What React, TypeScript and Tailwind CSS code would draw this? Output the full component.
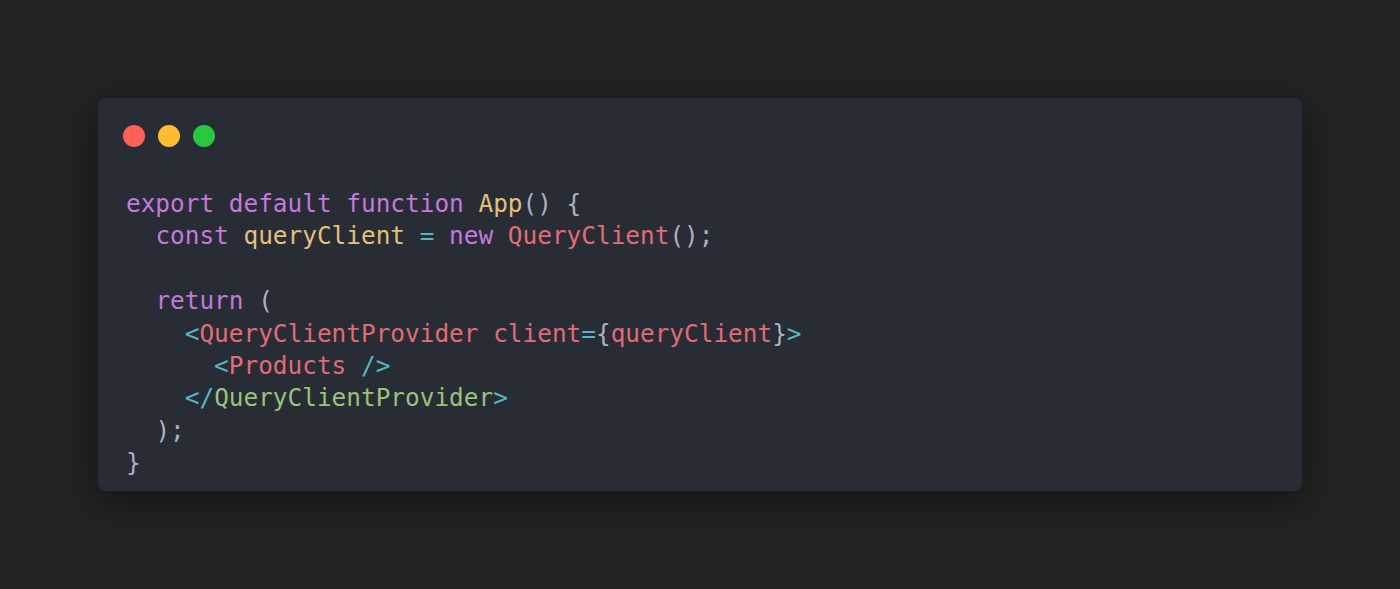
import React from "react";

const P = "text-[#c678dd]";
const Y = "text-[#e5c07b]";
const R = "text-[#e06c75]";
const C = "text-[#56b6c2]";
const G = "text-[#98c379]";
const D = "text-[#abb2bf]";

export default function App() {
  return (
    <div className="w-[1400px] h-[589px] bg-[#222424] p-[98px] box-border">
      <div className="w-full h-full rounded-[8px] bg-[#282c35] shadow-[0_10px_40px_rgba(0,0,0,0.45)] box-border">
        <div className="flex gap-[13px] pl-[25px] pt-[27px]">
          <div className="w-[22px] h-[22px] rounded-full bg-[#ff5f57]" />
          <div className="w-[22px] h-[22px] rounded-full bg-[#febc2e]" />
          <div className="w-[22px] h-[22px] rounded-full bg-[#28c840]" />
        </div>
        <pre
          className="mt-[41px] pl-[28px] text-[24.4px] leading-[32.4px] text-[#abb2bf]"
          style={{ fontFamily: '"DejaVu Sans Mono", monospace' }}
        >
          <span className={P}>export</span> <span className={P}>default</span>{" "}
          <span className={P}>function</span> <span className={Y}>App</span>
          <span className={D}>() {"{"}</span>
          {"\n"}
          {"  "}
          <span className={P}>const</span> <span className={Y}>queryClient</span>{" "}
          <span className={C}>=</span> <span className={P}>new</span>{" "}
          <span className={R}>QueryClient</span>
          <span className={D}>();</span>
          {"\n\n"}
          {"  "}
          <span className={P}>return</span> <span className={D}>(</span>
          {"\n"}
          {"    "}
          <span className={C}>&lt;</span>
          <span className={R}>QueryClientProvider</span> <span className={R}>client</span>
          <span className={C}>=</span>
          <span className={D}>{"{"}</span>
          <span className={R}>queryClient</span>
          <span className={D}>{"}"}</span>
          <span className={C}>&gt;</span>
          {"\n"}
          {"      "}
          <span className={C}>&lt;</span>
          <span className={R}>Products</span> <span className={C}>/&gt;</span>
          {"\n"}
          {"    "}
          <span className={C}>&lt;/</span>
          <span className={G}>QueryClientProvider</span>
          <span className={C}>&gt;</span>
          {"\n"}
          {"  "}
          <span className={D}>);</span>
          {"\n"}
          <span className={D}>{"}"}</span>
        </pre>
      </div>
    </div>
  );
}
